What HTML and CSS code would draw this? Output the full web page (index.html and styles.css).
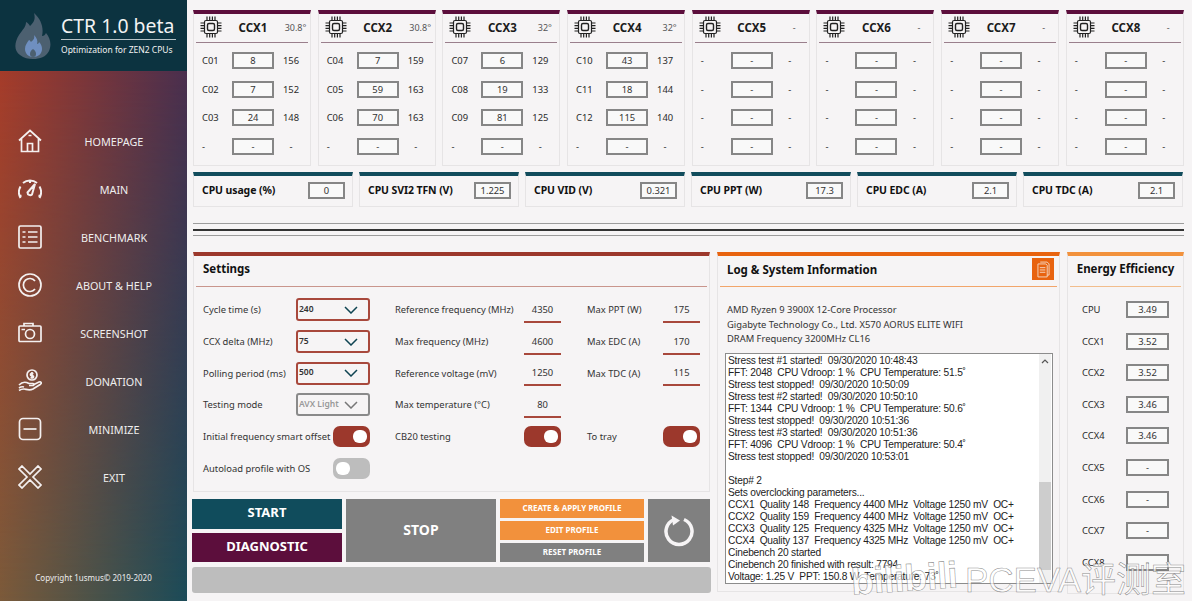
FILE: index.html
```html
<!DOCTYPE html>
<html lang="en">
<head>
  <meta charset="UTF-8" />
  <title>CTR 1.0 beta</title>
  <link rel="stylesheet" href="styles.css">
</head>
<body>
<svg class="defs" width="0" height="0">
  <symbol id="chip" viewBox="0 0 22 22">
    <g fill="none" stroke="#222" stroke-width="1.2">
      <rect x="4.5" y="4.5" width="13" height="13" rx="1.5" />
      <rect x="7.5" y="7.5" width="7" height="7" rx="1.5" stroke-width="1.4" />
      <path d="M7 0.5v4M9.7 0.5v4M12.4 0.5v4M15 0.5v4M7 17.5v4M9.7 17.5v4M12.4 17.5v4M15 17.5v4M0.5 7h4M0.5 9.7h4M0.5 12.4h4M0.5 15h4M17.5 7h4M17.5 9.7h4M17.5 12.4h4M17.5 15h4" />
    </g>
  </symbol>
</svg>

<aside class="sidebar">
  <div class="brand">
    <svg class="flame" viewBox="0 0 36 46">
      <path fill="#4c6070" d="M19 0c2 7-1 10-4 13-1-2-2-3-4-4 0 5-3 7-7 13-5 8-5 16 1 20 4 3 8 4 13 4 7 0 13-2 16-8 3-7 1-13-3-18-1 2-2 3-4 3 2-8-1-17-8-23z" />
      <path fill="#6f8fc0" d="M19 22c1 4-1 5-3 7-1-1-1-2-2-2-2 3-4 5-4 9 0 5 4 8 8 8 5 0 9-3 9-8 0-3-1-5-3-7 0 1-1 2-2 2 1-3 0-6-3-9z" />
      <path fill="#4c6070" d="M18 36c-2 1-3 3-3 5 0 2 1 3 3 3s3-1 3-3c0-2-1-4-3-5z" />
    </svg>
    <div class="brand-text">
      <div class="brand-title">CTR 1.0 beta</div>
      <div class="brand-sub">Optimization for ZEN2 CPUs</div>
    </div>
  </div>

  <div class="side-body">
    <nav class="nav">
      <a class="nav-item">
        <svg viewBox="0 0 24 24"><path d="M1 11.500L12 1.500l11 10M3.500 10v12.500h17V10M9.500 22.500v-8h5v8M10.500 6.500h3" /></svg>
        <span>HOMEPAGE</span>
      </a>
      <a class="nav-item">
        <svg class="gauge" viewBox="0 0 24 24"><path d="M2.500 21C.5 17.500.5 13 2.500 9.500M5 6C9 2.800 15 2.800 19 6M21.500 9.500c2 3.500 2 8 0 11.500M1 19.500l2.500-1M23 19.500l-2.500-1M12 3.500v2.500M9.500 15.500L17 7l-3 10.500a2.700 2.700 0 0 1-4.500-2z" /></svg>
        <span>MAIN</span>
      </a>
      <a class="nav-item">
        <svg viewBox="0 0 24 24"><rect x="1" y="1" width="22" height="22" rx="1.500" /><path d="M4.500 7h3M10 7h9.500M4.500 12h3M10 12h9.500M4.500 17h3M10 17h9.500" /></svg>
        <span>BENCHMARK</span>
      </a>
      <a class="nav-item">
        <svg viewBox="0 0 24 24"><circle cx="12" cy="12" r="11" /><path d="M17 8a6.500 6.500 0 1 0 0 8" /></svg>
        <span>ABOUT &amp; HELP</span>
      </a>
      <a class="nav-item">
        <svg viewBox="0 0 24 24"><rect x="1" y="5" width="22" height="15.500" rx="1" /><circle cx="12" cy="13" r="4.500" /><path d="M6 5V2.500h9V5M3.500 8.500H7" /></svg>
        <span>SCREENSHOT</span>
      </a>
      <a class="nav-item">
        <svg viewBox="0 0 24 24"><circle cx="14" cy="6" r="5" /><path d="M14 3v6M15.500 4.500h-2.300a1.200 1.200 0 0 0 0 2.200h1.600a1.200 1.200 0 0 1 0 2.200h-2.300M1 16c4-4 7-3 10-1.500h4c1.500 0 1.500 2 0 2h-4M15 16l6-3c2-.8 3 1 1.500 2.200L15 20c-4 2-7 0-9 0-2 0-3.500.5-5 1.500M1 19c2-1.500 3.500-1.500 5-1" /></svg>
        <span>DONATION</span>
      </a>
      <a class="nav-item">
        <svg viewBox="0 0 24 24"><rect x="1.500" y="1.500" width="21" height="21" rx="3.500" /><path d="M5.500 12h13" /></svg>
        <span>MINIMIZE</span>
      </a>
      <a class="nav-item">
        <svg viewBox="0 0 24 24"><path d="M4 1L12 9 20 1 23 4 15 12 23 20 20 23 12 15 4 23 1 20 9 12 1 4z" /></svg>
        <span>EXIT</span>
      </a>
    </nav>
    <div class="copyright">Copyright 1usmus© 2019-2020</div>
  </div>
</aside>

<main class="content">
  <section class="ccx-grid">
    <div class="card ccx">
      <div class="ccx-head"><svg class="chip"><use href="#chip" /></svg><b>CCX1</b><span class="temp">30.8°</span></div>
      <div class="core"><span>C01</span><div class="box">8</div><span>156</span></div>
      <div class="core"><span>C02</span><div class="box">7</div><span>152</span></div>
      <div class="core"><span>C03</span><div class="box">24</div><span>148</span></div>
      <div class="core"><span>-</span><div class="box">-</div><span>-</span></div>
    </div>
    <div class="card ccx">
      <div class="ccx-head"><svg class="chip"><use href="#chip" /></svg><b>CCX2</b><span class="temp">30.8°</span></div>
      <div class="core"><span>C04</span><div class="box">7</div><span>159</span></div>
      <div class="core"><span>C05</span><div class="box">59</div><span>163</span></div>
      <div class="core"><span>C06</span><div class="box">70</div><span>163</span></div>
      <div class="core"><span>-</span><div class="box">-</div><span>-</span></div>
    </div>
    <div class="card ccx">
      <div class="ccx-head"><svg class="chip"><use href="#chip" /></svg><b>CCX3</b><span class="temp">32°</span></div>
      <div class="core"><span>C07</span><div class="box">6</div><span>129</span></div>
      <div class="core"><span>C08</span><div class="box">19</div><span>133</span></div>
      <div class="core"><span>C09</span><div class="box">81</div><span>125</span></div>
      <div class="core"><span>-</span><div class="box">-</div><span>-</span></div>
    </div>
    <div class="card ccx">
      <div class="ccx-head"><svg class="chip"><use href="#chip" /></svg><b>CCX4</b><span class="temp">32°</span></div>
      <div class="core"><span>C10</span><div class="box">43</div><span>137</span></div>
      <div class="core"><span>C11</span><div class="box">18</div><span>144</span></div>
      <div class="core"><span>C12</span><div class="box">115</div><span>140</span></div>
      <div class="core"><span>-</span><div class="box">-</div><span>-</span></div>
    </div>
    <div class="card ccx">
      <div class="ccx-head"><svg class="chip"><use href="#chip" /></svg><b>CCX5</b><span class="temp">-</span></div>
      <div class="core"><span>-</span><div class="box">-</div><span>-</span></div>
      <div class="core"><span>-</span><div class="box">-</div><span>-</span></div>
      <div class="core"><span>-</span><div class="box">-</div><span>-</span></div>
      <div class="core"><span>-</span><div class="box">-</div><span>-</span></div>
    </div>
    <div class="card ccx">
      <div class="ccx-head"><svg class="chip"><use href="#chip" /></svg><b>CCX6</b><span class="temp">-</span></div>
      <div class="core"><span>-</span><div class="box">-</div><span>-</span></div>
      <div class="core"><span>-</span><div class="box">-</div><span>-</span></div>
      <div class="core"><span>-</span><div class="box">-</div><span>-</span></div>
      <div class="core"><span>-</span><div class="box">-</div><span>-</span></div>
    </div>
    <div class="card ccx">
      <div class="ccx-head"><svg class="chip"><use href="#chip" /></svg><b>CCX7</b><span class="temp">-</span></div>
      <div class="core"><span>-</span><div class="box">-</div><span>-</span></div>
      <div class="core"><span>-</span><div class="box">-</div><span>-</span></div>
      <div class="core"><span>-</span><div class="box">-</div><span>-</span></div>
      <div class="core"><span>-</span><div class="box">-</div><span>-</span></div>
    </div>
    <div class="card ccx">
      <div class="ccx-head"><svg class="chip"><use href="#chip" /></svg><b>CCX8</b><span class="temp">-</span></div>
      <div class="core"><span>-</span><div class="box">-</div><span>-</span></div>
      <div class="core"><span>-</span><div class="box">-</div><span>-</span></div>
      <div class="core"><span>-</span><div class="box">-</div><span>-</span></div>
      <div class="core"><span>-</span><div class="box">-</div><span>-</span></div>
    </div>
  </section>

  <section class="metrics">
    <div class="card metric"><b>CPU usage (%)</b><div class="box">0</div></div>
    <div class="card metric"><b>CPU SVI2 TFN (V)</b><div class="box">1.225</div></div>
    <div class="card metric"><b>CPU VID (V)</b><div class="box">0.321</div></div>
    <div class="card metric"><b>CPU PPT (W)</b><div class="box">17.3</div></div>
    <div class="card metric"><b>CPU EDC (A)</b><div class="box">2.1</div></div>
    <div class="card metric"><b>CPU TDC (A)</b><div class="box">2.1</div></div>
  </section>

  <div class="rules"><hr class="thin"><hr class="thick"><hr class="thin"></div>

  <section class="lower">
    <div class="left-col">
      <div class="card settings">
        <h2>Settings</h2>
        <div class="settings-grid">
          <div class="s-col s-col1">
            <div class="s-row"><label>Cycle time (s)</label><div class="select"><b>240</b><svg viewBox="0 0 14 8"><path d="M1 1l6 6 6-6" /></svg></div></div>
            <div class="s-row"><label>CCX delta (MHz)</label><div class="select"><b>75</b><svg viewBox="0 0 14 8"><path d="M1 1l6 6 6-6" /></svg></div></div>
            <div class="s-row"><label>Polling period (ms)</label><div class="select"><b>500</b><svg viewBox="0 0 14 8"><path d="M1 1l6 6 6-6" /></svg></div></div>
            <div class="s-row"><label>Testing mode</label><div class="select disabled"><b>AVX Light</b><svg viewBox="0 0 14 8"><path d="M1 1l6 6 6-6" /></svg></div></div>
            <div class="s-row"><label>Initial frequency smart offset</label><div class="toggle on"></div></div>
            <div class="s-row"><label>Autoload profile with OS</label><div class="toggle"></div></div>
          </div>
          <div class="s-col s-col2">
            <div class="s-row"><label>Reference frequency (MHz)</label><div class="field">4350</div></div>
            <div class="s-row"><label>Max frequency (MHz)</label><div class="field">4600</div></div>
            <div class="s-row"><label>Reference voltage (mV)</label><div class="field">1250</div></div>
            <div class="s-row"><label>Max temperature (°C)</label><div class="field">80</div></div>
            <div class="s-row"><label>CB20 testing</label><div class="toggle on"></div></div>
          </div>
          <div class="s-col s-col3">
            <div class="s-row"><label>Max PPT (W)</label><div class="field">175</div></div>
            <div class="s-row"><label>Max EDC (A)</label><div class="field">170</div></div>
            <div class="s-row"><label>Max TDC (A)</label><div class="field">115</div></div>
            <div class="s-row"></div>
            <div class="s-row"><label>To tray</label><div class="toggle on"></div></div>
          </div>
        </div>
      </div>

      <div class="actions">
        <div class="action-pair">
          <button class="btn teal">START</button>
          <button class="btn plum">DIAGNOSTIC</button>
        </div>
        <button class="btn grey stop">STOP</button>
        <div class="profile-btns">
          <button class="btn small orange">CREATE &amp; APPLY PROFILE</button>
          <button class="btn small orange">EDIT PROFILE</button>
          <button class="btn small grey">RESET PROFILE</button>
        </div>
        <button class="btn grey reload" aria-label="Reload">
          <svg viewBox="0 0 32 32"><path d="M11 4.500a13 13 0 1 0 10 0" /><path class="tip" d="M8.500 0.500l8.500 5-7 5z" /></svg>
        </button>
      </div>

      <div class="progress"></div>
    </div>

    <div class="card log">
      <div class="log-head">
        <h2>Log &amp; System Information</h2>
        <div class="log-btn">
          <svg viewBox="0 0 14 18"><path d="M3.500 1h7.500l2 2v12h-2M1 3h8.500l1.500 1.500V17H1z" /><path d="M3 7h6M3 9.500h6M3 12h6" /></svg>
        </div>
      </div>
      <div class="sys-info">
        <div>AMD Ryzen 9 3900X 12-Core Processor</div>
        <div>Gigabyte Technology Co., Ltd. X570 AORUS ELITE WIFI</div>
        <div>DRAM Frequency 3200MHz CL16</div>
      </div>
      <div class="log-box">
        <div class="log-lines">
          <div>Stress test #1 started!  09/30/2020 10:48:43</div>
          <div>FFT: 2048  CPU Vdroop: 1 %  CPU Temperature: 51.5˚</div>
          <div>Stress test stopped!  09/30/2020 10:50:09</div>
          <div>Stress test #2 started!  09/30/2020 10:50:10</div>
          <div>FFT: 1344  CPU Vdroop: 1 %  CPU Temperature: 50.6˚</div>
          <div>Stress test stopped!  09/30/2020 10:51:36</div>
          <div>Stress test #3 started!  09/30/2020 10:51:36</div>
          <div>FFT: 4096  CPU Vdroop: 1 %  CPU Temperature: 50.4˚</div>
          <div>Stress test stopped!  09/30/2020 10:53:01</div>
          <div>&nbsp;</div>
          <div>Step# 2</div>
          <div>Sets overclocking parameters...</div>
          <div>CCX1  Quality 148  Frequency 4400 MHz  Voltage 1250 mV  OC+</div>
          <div>CCX2  Quality 159  Frequency 4400 MHz  Voltage 1250 mV  OC+</div>
          <div>CCX3  Quality 125  Frequency 4325 MHz  Voltage 1250 mV  OC+</div>
          <div>CCX4  Quality 137  Frequency 4325 MHz  Voltage 1250 mV  OC+</div>
          <div>Cinebench 20 started</div>
          <div>Cinebench 20 finished with result: 7794</div>
          <div>Voltage: 1.25 V  PPT: 150.8 W  Temperature: 73˚</div>
        </div>
        <div class="scrollbar">
          <svg class="arrow" viewBox="0 0 8 5"><path d="M1 4l3-3 3 3" /></svg>
          <div class="thumb"></div>
        </div>
      </div>
    </div>

    <div class="card energy">
      <h2>Energy Efficiency</h2>
      <div class="e-row"><span>CPU</span><div class="box">3.49</div></div>
      <div class="e-row"><span>CCX1</span><div class="box">3.52</div></div>
      <div class="e-row"><span>CCX2</span><div class="box">3.52</div></div>
      <div class="e-row"><span>CCX3</span><div class="box">3.46</div></div>
      <div class="e-row"><span>CCX4</span><div class="box">3.46</div></div>
      <div class="e-row"><span>CCX5</span><div class="box">-</div></div>
      <div class="e-row"><span>CCX6</span><div class="box">-</div></div>
      <div class="e-row"><span>CCX7</span><div class="box">-</div></div>
      <div class="e-row"><span>CCX8</span><div class="box">-</div></div>
    </div>
  </section>
</main>

<div class="watermark"><span class="wm-logo">bilibili</span><span class="wm-text">PCEVA评测室</span></div>
</body>
</html>
```

FILE: styles.css
```css
:root {
  --plum: #5c0e3c;
  --teal: #114c5c;
  --rust: #9c382c;
  --orange: #e8630f;
  --light-orange: #f2913c;
  --page: #f6f4f5;
  --edge: #e6e4e5;
  --box: #868686;
  --text: #2a2a2a;
}
* {
  box-sizing: border-box;
}
body {
  margin: 0;
  width: 1192px;
  height: 601px;
  overflow: hidden;
  display: flex;
  position: relative;
  background-color: var(--page);
  color: var(--text);
  font-family: 'Noto Sans', 'Open Sans', sans-serif;
  font-size: 9.400px;
}
.defs {
  position: absolute;
}

/* sidebar */
.sidebar {
  width: 187px;
  flex-shrink: 0;
  display: flex;
  flex-direction: column;
}
.brand {
  height: 71px;
  background-color: #0c3340;
  display: flex;
  padding: 13px 0 0 15px;
  color: #f2f2f2;
}
.flame {
  width: 36px;
  height: 46px;
}
.brand-text {
  margin-left: 10px;
  width: 115px;
}
.brand-title {
  font-size: 19.400px;
  line-height: 25px;
  height: 27px;
  border-bottom: 1px solid #b8c4c8;
  white-space: nowrap;
}
.brand-sub {
  font-size: 8.500px;
  line-height: 20px;
  white-space: nowrap;
}
.side-body {
  flex-grow: 1;
  position: relative;
  padding-top: 46px;
  background: linear-gradient(to right, #a63c2a, #4a2f4e);
}
.side-body::before {
  content: "";
  position: absolute;
  inset: 0;
  background: linear-gradient(to right, #7b5a3a, #1b4b58);
  -webkit-mask-image: linear-gradient(to bottom, transparent, #000);
  mask-image: linear-gradient(to bottom, transparent, #000);
}
.nav {
  position: relative;
  display: flex;
  flex-direction: column;
}
.nav-item {
  height: 48px;
  display: flex;
  align-items: center;
  padding-left: 18px;
  color: #eee;
  font-size: 10.800px;
}
.nav-item svg {
  width: 24px;
  height: 24px;
  flex-shrink: 0;
  fill: none;
  stroke: #f4f0f0;
  stroke-width: 1.700;
}
.nav-item svg.gauge {
  stroke-width: 2;
}
.nav-item span {
  width: 144px;
  text-align: center;
}
.copyright {
  position: absolute;
  left: 0;
  right: 0;
  bottom: 18px;
  text-align: center;
  font-size: 8px;
  color: #ececec;
}

/* main */
.content {
  flex-grow: 1;
  min-width: 0;
  padding: 10px 8px 0 5px;
}
.card {
  background-color: var(--page);
  border: 1px solid var(--edge);
  border-top-width: 4px;
}
.box {
  border: 2px solid var(--box);
  background-color: #f9f9f9;
  text-align: center;
  color: #333;
}
.ccx-grid {
  display: grid;
  grid-template-columns: repeat(8, 118px);
  column-gap: 6.700px;
  margin-left: 1px;
}
.ccx {
  height: 156px;
  border-top-color: var(--plum);
  padding: 0 2px;
}
.ccx-head {
  height: 29px;
  border-bottom: 1px solid #9a7f8c;
  display: flex;
  align-items: center;
  margin-bottom: 9px;
  padding: 0 0 2px 4px;
}
.chip {
  width: 22px;
  height: 22px;
  flex-shrink: 0;
}
.ccx-head b {
  width: 62px;
  text-align: center;
  font-size: 11.500px;
  color: #1c1c1c;
}
.temp {
  font-size: 9px;
  color: #555;
  width: 23px;
  text-align: center;
}
.core {
  display: grid;
  grid-template-columns: 36px 42px 34px;
  align-items: center;
  height: 17px;
  margin-bottom: 11.500px;
}
.core span {
  padding-left: 6px;
}
.core span:last-child {
  padding-left: 0;
  text-align: center;
}
.core .box {
  height: 17px;
  line-height: 13px;
}
.metrics {
  display: grid;
  grid-template-columns: repeat(6, 160px);
  column-gap: 6px;
  margin: 6px 0 0 1px;
}
.metric {
  height: 35px;
  border-top-color: var(--teal);
  display: flex;
  align-items: center;
  justify-content: space-between;
  padding: 0 7px 2px 8px;
}
.metric b {
  font-size: 10.500px;
  font-weight: 700;
  letter-spacing: -0.1px;
  color: #111;
}
.metric .box {
  width: 37px;
  height: 17px;
  line-height: 13px;
}
.rules {
  margin: 16px 0 0 1px;
}
.rules hr {
  border: none;
  margin: 0;
}
.rules .thin {
  height: 1px;
  background-color: #9c9c9c;
}
.rules .thick {
  height: 2px;
  background-color: #333;
  margin: 5px 0 4px;
}

/* lower area */
.lower {
  display: flex;
  margin-top: 16px;
  gap: 7px;
  height: 342px;
  padding-left: 1px;
}
.left-col {
  width: 517px;
  flex-shrink: 0;
  display: flex;
  flex-direction: column;
}
h2 {
  margin: 0;
  font-size: 11.500px;
  font-weight: 700;
  color: #111;
}
.settings {
  height: 240px;
  border-top-color: var(--rust);
  padding: 0 2px;
}
.settings h2 {
  height: 31px;
  line-height: 25px;
  padding-left: 7px;
  border-bottom: 1px solid #c9958c;
}
.settings-grid {
  display: flex;
  padding: 7px 0 0 7px;
}
.s-col {
  display: grid;
  grid-template-columns: minmax(0, 1fr);
  grid-auto-rows: 31.700px;
}
.s-col1 {
  width: 167px;
}
.s-col2 {
  width: 166px;
  margin-left: 25px;
}
.s-col3 {
  width: 113px;
  margin-left: 26px;
}
.s-row {
  display: flex;
  align-items: center;
  justify-content: space-between;
  white-space: nowrap;
  color: #333;
}
.select {
  width: 74px;
  height: 23px;
  border: 2px solid #a8483c;
  border-radius: 3px;
  display: flex;
  align-items: center;
  justify-content: space-between;
  padding: 0 10px 0 1px;
  font-size: 8.500px;
}
.select b {
  font-weight: 600;
  padding-bottom: 3px;
}
.select svg {
  width: 14px;
  height: 8px;
  fill: none;
  stroke: #0f4452;
  stroke-width: 1.500;
}
.select.disabled {
  border-color: #8a8a8a;
  color: #999;
}
.select.disabled svg {
  stroke: #777;
}
.field {
  width: 37px;
  height: 26px;
  text-align: center;
  line-height: 25px;
  border-bottom: 2px solid #a8483c;
}
.toggle {
  width: 37px;
  height: 21px;
  border-radius: 7px;
  background-color: #bdbdbd;
  padding: 4px 0 0 3px;
}
.toggle::after {
  content: "";
  display: block;
  width: 14px;
  height: 13px;
  border-radius: 6px;
  background-color: #fff;
}
.toggle.on {
  background-color: var(--rust);
  padding-left: 20px;
}

/* buttons */
.actions {
  display: flex;
  gap: 4px;
  height: 63px;
  margin: 7px 0 0 -1px;
}
.btn {
  border: none;
  padding: 0 0 3px;
  color: #fff;
  font-family: inherit;
  font-weight: 700;
  font-size: 13px;
}
.teal {
  background-color: #104c5c;
}
.plum {
  background-color: #5c0e3c;
}
.grey {
  background-color: #808080;
}
.orange {
  background-color: #f2913c;
}
.action-pair {
  width: 150px;
  display: flex;
  flex-direction: column;
  gap: 4px;
}
.action-pair .btn {
  flex: 1;
}
.stop {
  width: 150px;
  font-size: 14px;
}
.profile-btns {
  width: 144px;
  display: flex;
  flex-direction: column;
  gap: 3px;
}
.profile-btns .btn {
  flex: 1;
  font-size: 8px;
}
.reload {
  width: 62px;
  padding: 0;
  display: flex;
  align-items: center;
  justify-content: center;
}
.reload svg {
  width: 32px;
  height: 32px;
  fill: none;
  stroke: #f6f4f5;
  stroke-width: 3.500;
}
.reload .tip {
  fill: #f6f4f5;
  stroke: none;
}
.progress {
  height: 26px;
  margin: 5px 0 0 -1px;
  width: 519px;
  border-radius: 3px;
  background-color: #bdbdbd;
}

/* log */
.log {
  width: 343px;
  flex-shrink: 0;
  height: 340px;
  border-top-color: var(--orange);
  padding: 0 2px;
}
.log-head {
  height: 31px;
  border-bottom: 1px solid #f2a56a;
  display: flex;
  align-items: center;
  justify-content: space-between;
  padding: 0 3px 4px 7px;
}
.log-btn {
  width: 22px;
  height: 22px;
  background-color: var(--orange);
  display: flex;
  align-items: center;
  justify-content: center;
}
.log-btn svg {
  width: 13px;
  height: 17px;
  fill: none;
  stroke: #f4d8c4;
  stroke-width: 1;
}
.sys-info {
  padding: 16px 0 0 7px;
  line-height: 14.500px;
  color: #333;
  height: 66px;
}
.log-box {
  margin: 0 4px 0 5px;
  height: 231px;
  background-color: #fff;
  border: 1px solid #8c8c8c;
  display: flex;
  overflow: hidden;
}
.log-lines {
  flex-grow: 1;
  min-width: 0;
  padding: 1px 0 0 2px;
  font-family: 'Liberation Sans', Arial, sans-serif;
  font-size: 10.200px;
  letter-spacing: -0.2px;
  line-height: 12px;
  color: #222;
}
.log-lines div {
  white-space: pre;
}
.scrollbar {
  width: 12px;
  flex-shrink: 0;
  margin-right: 1px;
  background-color: #f0f0f0;
  padding-top: 5px;
  display: flex;
  flex-direction: column;
  align-items: center;
}
.arrow {
  width: 8px;
  height: 5px;
  fill: none;
  stroke: #555;
  stroke-width: 1.200;
}
.thumb {
  width: 100%;
  height: 88px;
  margin-top: 118px;
  background-color: #cdcdcd;
}

/* energy */
.energy {
  width: 117px;
  flex-shrink: 0;
  height: 342px;
  border-top-color: var(--light-orange);
  padding: 0 2px;
  overflow: hidden;
}
.energy h2 {
  height: 31px;
  line-height: 25px;
  text-align: center;
  border-bottom: 1px solid #f2bd8c;
  margin-bottom: 14px;
  white-space: nowrap;
}
.e-row {
  display: flex;
  align-items: center;
  height: 17px;
  margin-bottom: 14.600px;
  padding-left: 12px;
}
.e-row span {
  width: 44px;
}
.e-row .box {
  width: 43px;
  height: 17px;
  line-height: 13px;
}

/* video watermark laid over the capture */
.watermark {
  position: absolute;
  right: 6px;
  bottom: 0;
  display: flex;
  align-items: flex-end;
  gap: 7px;
  color: rgba(255, 255, 255, 0.7);
  -webkit-text-stroke: 0.5px rgba(80, 80, 80, 0.7);
  white-space: nowrap;
}
.wm-logo {
  font-family: 'Liberation Sans', sans-serif;
  font-size: 37px;
  font-weight: 700;
  line-height: 44px;
  transform: rotate(-4deg);
}
.wm-text {
  font-family: 'Liberation Sans', 'Noto Sans CJK SC', sans-serif;
  font-size: 35px;
  line-height: 42px;
}
```
